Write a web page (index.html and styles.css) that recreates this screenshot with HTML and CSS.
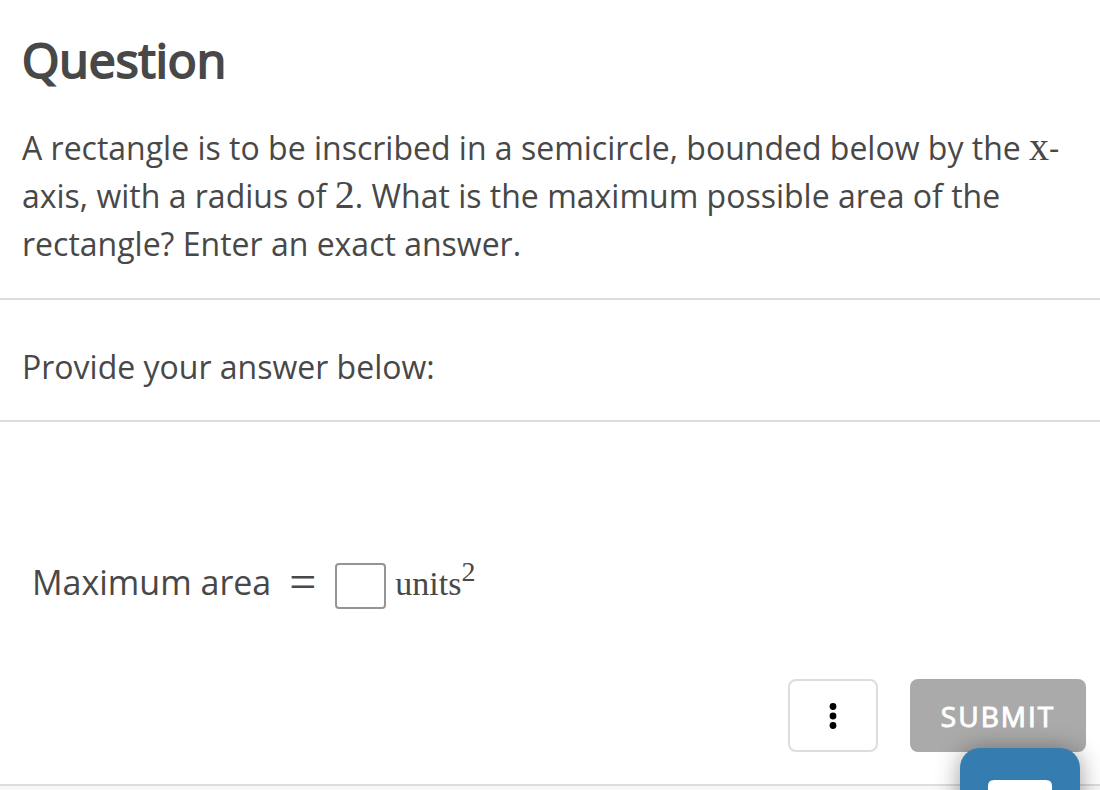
FILE: index.html
```html
<!DOCTYPE html>
<html lang="en">
<head>
	<meta charset="utf-8">
	<meta name="viewport" content="width=device-width, initial-scale=1">
	<title>Question</title>
	<link rel="stylesheet" href="styles.css">
</head>
<body>

<main class="question">
	<section class="prompt">
		<h1>Question</h1>
		<p>A rectangle is to be inscribed in a semicircle, bounded below by the <span class="math inline">x</span>-axis, with a radius of <span class="math inline">2</span>. What is the maximum possible area of the rectangle? Enter an exact answer.</p>
	</section>

	<section class="instruction">
		<p>Provide your answer below:</p>
	</section>

	<form class="answer">
		<div class="answer-row">
			<label for="area">Maximum area</label>
			<span class="math equals">=</span>
			<input type="text" id="area" class="answer-input">
			<span class="math units">units<sup>2</sup></span>
		</div>
		<div class="actions">
			<button type="button" class="more" aria-label="More options">
				<svg width="8" height="28" viewBox="0 0 8 28">
					<circle cx="4" cy="4.5" r="3.4"/>
					<circle cx="4" cy="14" r="3.4"/>
					<circle cx="4" cy="23.5" r="3.4"/>
				</svg>
			</button>
			<button type="submit" class="submit" disabled>SUBMIT</button>
		</div>
	</form>
</main>

<button type="button" class="chat" aria-label="Open chat">
	<svg width="64" height="64" viewBox="0 0 64 64">
		<path fill="#fff" d="M6 0H58Q64 0 64 6V64L50 54H6Q0 54 0 48V6Q0 0 6 0Z"/>
	</svg>
</button>

</body>
</html>
```

FILE: styles.css
```css
* {
	box-sizing: border-box;
	margin: 0;
	padding: 0;
}

body {
	overflow: hidden;
	background: #f7f7f7;
	color: #484848;
	font-family: "Open Sans", sans-serif;
	font-size: 32px;
	line-height: 48px;
}

.question {
	border-bottom: 2px solid #ddd;
	background: #fff;
}

.prompt {
	padding: 30px 22px;
	border-bottom: 2px solid #ddd;
}

.prompt h1 {
	margin-bottom: 34px;
	font-size: 48px;
	font-weight: 400;
	line-height: 60px;
	-webkit-text-stroke: 2px #484848;
}

.math {
	font-family: "Liberation Serif", serif;
}

.inline {
	font-size: 40px;
	line-height: 0;
}

.instruction {
	padding: 43px 22px 29px;
	border-bottom: 2px solid #ddd;
}

.answer {
	padding: 136px 14px 32px 32px;
}

.answer-row {
	display: flex;
	align-items: baseline;
	height: 51px;
}

.answer-row label {
	font-size: 34px;
}

.equals {
	align-self: flex-start;
	margin: 0 19px 0 18px;
	font-size: 48px;
}

.answer-input {
	align-self: flex-end;
	width: 51px;
	height: 46px;
	border: 2px solid #959595;
	border-radius: 4px;
	background: #fff;
	font: inherit;
	text-align: center;
}

.units {
	margin-left: 9px;
	font-size: 34px;
}

.units sup {
	font-size: 28px;
	line-height: 0;
	vertical-align: 14px;
}

.actions {
	display: flex;
	justify-content: flex-end;
	gap: 32px;
	margin-top: 70px;
}

.actions button {
	height: 73px;
	border-radius: 8px;
}

.more {
	display: flex;
	align-items: center;
	justify-content: center;
	width: 90px;
	border: 2px solid #ddd;
	background: #fff;
}

.submit {
	width: 176px;
	border: 0;
	background: #aaa;
	color: #fff;
	font-family: inherit;
	font-size: 28px;
	letter-spacing: 2px;
	-webkit-text-stroke: 1px #fff;
}

/* floating chat launcher, cut off by the bottom edge */
.chat {
	position: fixed;
	right: 20px;
	bottom: -78px;
	width: 120px;
	height: 120px;
	padding-top: 10px;
	border: 0;
	border-radius: 20px;
	background: #357cb1;
	box-shadow: 0 2px 24px rgba(0, 0, 0, 0.4);
}
```
